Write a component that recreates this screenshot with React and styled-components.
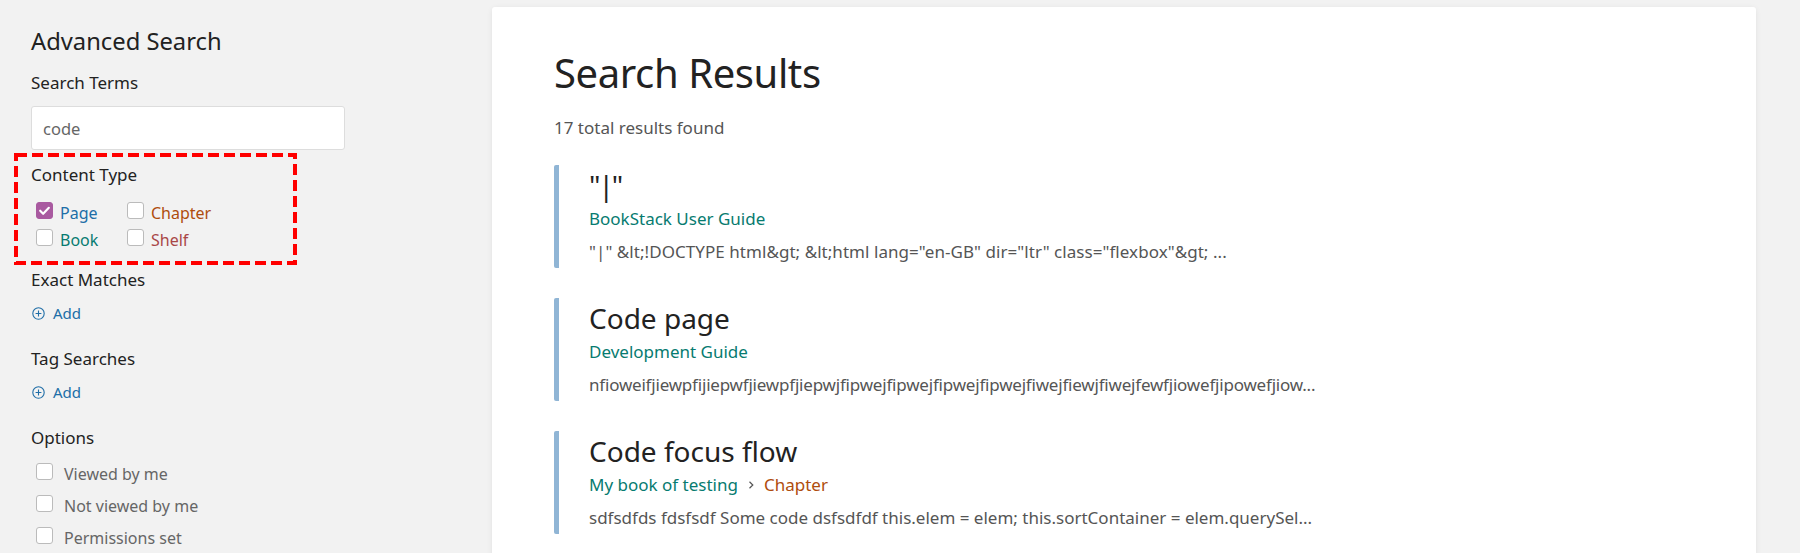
import React from 'react';
import styled, { createGlobalStyle } from 'styled-components';

const GlobalStyle = createGlobalStyle`
  html, body {
    margin: 0;
    height: 553px;
    overflow: hidden;
    background: #f2f2f2;
    font-family: "Noto Sans", "Open Sans", sans-serif;
  }
`;

const Page = styled.div`
  display: flex;
  align-items: flex-start;
  height: 553px;
  overflow: hidden;
`;

const Sidebar = styled.aside`
  width: 314px;
  margin-left: 31px;
  margin-right: 147px;
  flex-shrink: 0;
  padding-top: 24px;
`;

const SideTitle = styled.h2`
  margin: 0 0 13px;
  font-size: 23.75px;
  line-height: 34px;
  font-weight: 400;
  color: #222;
`;

const SideLabel = styled.h6`
  margin: 0;
  font-size: 17px;
  line-height: 24px;
  font-weight: 400;
  color: #222;
`;

const SearchInput = styled.div`
  box-sizing: border-box;
  height: 44px;
  margin-top: 11px;
  padding: 0 11px;
  display: flex;
  align-items: center;
  background: #fff;
  border: 1px solid #ddd;
  border-radius: 3px;
  font-size: 16.5px;
  color: #666;
`;

const ContentTypeSection = styled.section`
  position: relative;
  margin-top: 13px;
`;

const Highlight = styled.svg`
  position: absolute;
  left: -17px;
  top: -10px;
  width: 283px;
  height: 112px;
`;

const TypeGrid = styled.div`
  display: grid;
  grid-template-columns: 91px auto;
  justify-content: start;
  row-gap: 10px;
  margin: 15px 0 0 5px;
`;

const CheckLabel = styled.div`
  display: flex;
  align-items: center;
  gap: 7px;
  height: 17px;
  font-size: 16px;
  color: ${p => p.$color};
`;

const Box = styled.span`
  box-sizing: border-box;
  width: 17px;
  height: 17px;
  flex-shrink: 0;
  display: flex;
  align-items: center;
  justify-content: center;
  background: ${p => (p.$checked ? '#a95aa0' : '#fff')};
  border: 1px solid ${p => (p.$checked ? '#a95aa0' : '#bbb')};
  border-radius: 3px;
`;

// label text sits slightly below the middle of its checkbox
const BoxText = styled.span`
  padding-top: 4px;
`;

const FilterSection = styled.section`
  margin-top: ${p => p.$top}px;
`;

const AddLink = styled.div`
  display: flex;
  align-items: center;
  gap: 8px;
  margin-top: 10px;
  margin-left: 1px;
  font-size: 15px;
  line-height: 22px;
  color: #206ea7;
`;

const OptionList = styled.div`
  display: flex;
  flex-direction: column;
  gap: 15px;
  margin: 13px 0 0 5px;
`;

const OptionRow = styled.div`
  display: flex;
  align-items: center;
  gap: 11px;
  height: 17px;
  font-size: 16px;
  color: #666;
`;

const Card = styled.main`
  box-sizing: border-box;
  width: 1264px;
  height: 560px;
  margin-top: 7px;
  padding: 40px 62px;
  flex-shrink: 0;
  background: #fff;
  border-radius: 3px;
  box-shadow: 0 1px 6px -1px rgba(0, 0, 0, 0.1);
`;

const PageTitle = styled.h1`
  margin: 0;
  font-size: 40px;
  line-height: 52px;
  font-weight: 400;
  color: #222;
  letter-spacing: -0.4px;
`;

const TotalCount = styled.p`
  margin: 17px 0 0;
  font-size: 17px;
  line-height: 24px;
  color: #555;
`;

const ResultList = styled.div`
  display: flex;
  flex-direction: column;
  gap: 30px;
  margin-top: 25px;
`;

const Result = styled.article`
  box-sizing: border-box;
  height: 103px;
  padding: 0 0 0 30px;
  border-left: 5px solid #90b5d5;
  border-radius: 2px;
`;

const ResultTitle = styled.h4`
  margin: 0;
  font-size: 28px;
  line-height: 40px;
  font-weight: 400;
  color: #222;
  letter-spacing: ${p => p.$tracking || 0}px;
`;

const Crumbs = styled.div`
  display: flex;
  align-items: center;
  gap: 7px;
  margin-top: 2px;
  font-size: 17px;
  line-height: 24px;
`;

const Crumb = styled.span`
  color: ${p => p.$color};
`;

const Excerpt = styled.p`
  margin: 9px 0 0;
  font-size: 17px;
  line-height: 24px;
  color: #555;
  white-space: nowrap;
  letter-spacing: ${p => p.$tracking || 0}px;
`;

const Check = () => (
  <svg width="13" height="13" viewBox="0 0 24 24" fill="none" stroke="#fff" strokeWidth="4" strokeLinecap="round" strokeLinejoin="round">
    <path d="M4 12.5l5.5 5.5L20 7" />
  </svg>
);

const PlusCircle = () => (
  <svg width="13" height="13" viewBox="0 0 13 13" fill="none" stroke="#206ea7" strokeWidth="1.1">
    <circle cx="6.5" cy="6.5" r="5.7" />
    <path d="M6.5 3.6v5.8M3.6 6.5h5.8" />
  </svg>
);

const Chevron = () => (
  <svg width="12" height="12" viewBox="0 0 12 12" fill="none" stroke="#555" strokeWidth="1.2">
    <path d="M4.5 2.8 7.8 6 4.5 9.2" />
  </svg>
);

const TEAL = '#077b70';
const ORANGE = '#af4d0d';

const types = [
  { label: 'Page', color: '#206ea7', checked: true },
  { label: 'Chapter', color: ORANGE },
  { label: 'Book', color: TEAL },
  { label: 'Shelf', color: '#a94747' },
];

const options = ['Viewed by me', 'Not viewed by me', 'Permissions set'];

const results = [
  {
    title: '"|"',
    titleTracking: -2,
    crumbs: [{ text: 'BookStack User Guide', color: TEAL }],
    excerpt: '"|" &lt;!DOCTYPE html&gt; &lt;html lang="en-GB" dir="ltr" class="flexbox"&gt; ...',
    tracking: 0.05,
  },
  {
    title: 'Code page',
    crumbs: [{ text: 'Development Guide', color: TEAL }],
    excerpt: 'nfioweifjiewpfijiepwfjiewpfjiepwjfipwejfipwejfipwejfipwejfiwejfiewjfiwejfewfjiowefjipowefjiow...',
    tracking: -0.2,
  },
  {
    title: 'Code focus flow',
    crumbs: [
      { text: 'My book of testing', color: TEAL },
      { text: 'Chapter', color: ORANGE },
    ],
    excerpt: 'sdfsdfds fdsfsdf Some code dsfsdfdf this.elem = elem; this.sortContainer = elem.querySel...',
  },
];

export default function App() {
  return (
    <Page>
      <GlobalStyle />
      <Sidebar>
        <SideTitle>Advanced Search</SideTitle>
        <SideLabel>Search Terms</SideLabel>
        <SearchInput>code</SearchInput>

        <ContentTypeSection>
          <Highlight viewBox="0 0 283 112" fill="none">
            <rect x="2" y="2" width="279" height="108" stroke="#f00" strokeWidth="4" strokeDasharray="11 5" />
          </Highlight>
          <SideLabel>Content Type</SideLabel>
          <TypeGrid>
            {types.map(t => (
              <CheckLabel key={t.label} $color={t.color}>
                <Box $checked={t.checked}>{t.checked && <Check />}</Box>
                <BoxText>{t.label}</BoxText>
              </CheckLabel>
            ))}
          </TypeGrid>
        </ContentTypeSection>

        <FilterSection $top={22}>
          <SideLabel>Exact Matches</SideLabel>
          <AddLink><PlusCircle />Add</AddLink>
        </FilterSection>

        <FilterSection $top={23}>
          <SideLabel>Tag Searches</SideLabel>
          <AddLink><PlusCircle />Add</AddLink>
        </FilterSection>

        <FilterSection $top={23}>
          <SideLabel>Options</SideLabel>
          <OptionList>
            {options.map(o => (
              <OptionRow key={o}><Box /><BoxText>{o}</BoxText></OptionRow>
            ))}
          </OptionList>
        </FilterSection>
      </Sidebar>

      <Card>
        <PageTitle>Search Results</PageTitle>
        <TotalCount>17 total results found</TotalCount>
        <ResultList>
          {results.map(r => (
            <Result key={r.title}>
              <ResultTitle $tracking={r.titleTracking}>{r.title}</ResultTitle>
              <Crumbs>
                {r.crumbs.map((c, i) => (
                  <React.Fragment key={c.text}>
                    {i > 0 && <Chevron />}
                    <Crumb $color={c.color}>{c.text}</Crumb>
                  </React.Fragment>
                ))}
              </Crumbs>
              <Excerpt $tracking={r.tracking}>{r.excerpt}</Excerpt>
            </Result>
          ))}
        </ResultList>
      </Card>
    </Page>
  );
}
